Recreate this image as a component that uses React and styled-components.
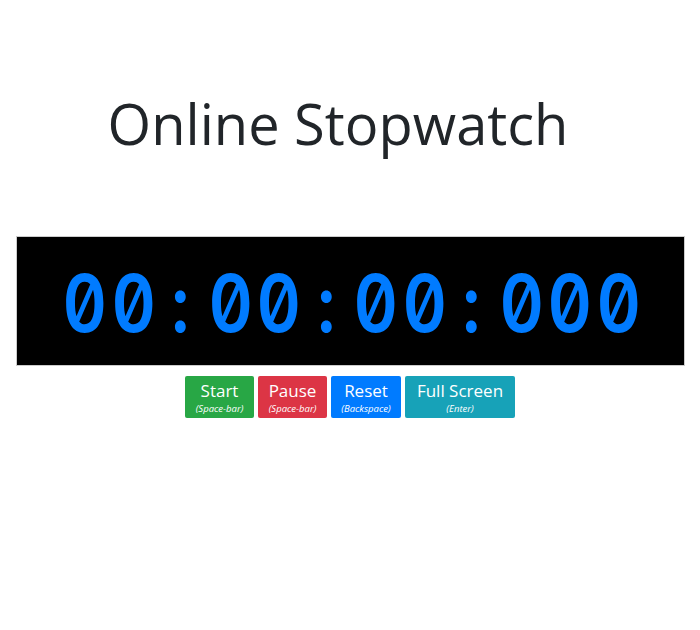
import React, { useEffect, useRef, useState } from 'react'
import styled, { createGlobalStyle } from 'styled-components'

const GlobalStyle = createGlobalStyle`
  body {
    margin: 0;
    background: #fff;
    font-family: "Open Sans", "Noto Sans", sans-serif;
    color: #212529;
  }
`

const Page = styled.div`
  width: 700px;
  padding-top: 90px;
  display: flex;
  flex-direction: column;
  align-items: center;
`

const Title = styled.h1`
  margin: 0 24px 0 0;
  font-size: 56px;
  font-weight: 400;
  line-height: 1.2;
  color: #212529;
`

const Display = styled.div`
  margin-top: 79px;
  width: 669px;
  height: 130px;
  box-sizing: border-box;
  background: #000;
  border: 1px solid #ccc;
  display: flex;
  align-items: center;
  justify-content: center;
`

const Digits = styled.div`
  display: flex;
  font-family: Inter, sans-serif;
  font-size: 80px;
  font-weight: 600;
  font-variant-numeric: tabular-nums slashed-zero;
  color: #007bff;
  line-height: 1;
  padding: 4px 0 0 0;
`

// fixed-width cell so the readout doesn't jitter while counting
const Cell = styled.span`
  width: 48.5px;
  text-align: center;
  transform: scaleX(0.86);
`

const Controls = styled.div`
  margin-top: 10px;
  display: flex;
  gap: 4px;
`

const Button = styled.button`
  height: 42px;
  min-width: ${p => p.$w}px;
  padding: 0 10px;
  border: none;
  border-radius: 2px;
  background: ${p => p.$bg};
  color: #fff;
  font-family: "Open Sans", "Noto Sans", sans-serif;
  display: flex;
  flex-direction: column;
  align-items: center;
  justify-content: center;
  cursor: pointer;
`

const Label = styled.span`
  font-size: 17px;
  line-height: 23px;
`

const Key = styled.span`
  font-size: 9.5px;
  font-style: italic;
  line-height: 13px;
`

const pad = (n, len = 2) => String(n).padStart(len, '0')

function format(ms) {
  const h = Math.floor(ms / 3600000)
  const m = Math.floor(ms / 60000) % 60
  const s = Math.floor(ms / 1000) % 60
  return `${pad(h)}:${pad(m)}:${pad(s)}:${pad(ms % 1000, 3)}`
}

export default function App() {
  const [elapsed, setElapsed] = useState(0)
  const [running, setRunning] = useState(false)
  const startRef = useRef(0)

  useEffect(() => {
    if (!running) return
    startRef.current = Date.now() - elapsed
    const id = setInterval(() => setElapsed(Date.now() - startRef.current), 10)
    return () => clearInterval(id)
  }, [running])

  const buttons = [
    { label: 'Start', key: '(Space-bar)', bg: '#28a745', w: 69, onClick: () => setRunning(true) },
    { label: 'Pause', key: '(Space-bar)', bg: '#dc3545', w: 69, onClick: () => setRunning(false) },
    { label: 'Reset', key: '(Backspace)', bg: '#007bff', w: 70, onClick: () => { setRunning(false); setElapsed(0) } },
    { label: 'Full Screen', key: '(Enter)', bg: '#17a2b8', w: 110, onClick: () => {} },
  ]

  return (
    <>
      <GlobalStyle />
      <Page>
        <Title>Online Stopwatch</Title>
        <Display>
          <Digits>
            {format(elapsed).split('').map((c, i) => <Cell key={i}>{c}</Cell>)}
          </Digits>
        </Display>
        <Controls>
          {buttons.map(b => (
            <Button key={b.label} $bg={b.bg} $w={b.w} onClick={b.onClick}>
              <Label>{b.label}</Label>
              <Key>{b.key}</Key>
            </Button>
          ))}
        </Controls>
      </Page>
    </>
  )
}
